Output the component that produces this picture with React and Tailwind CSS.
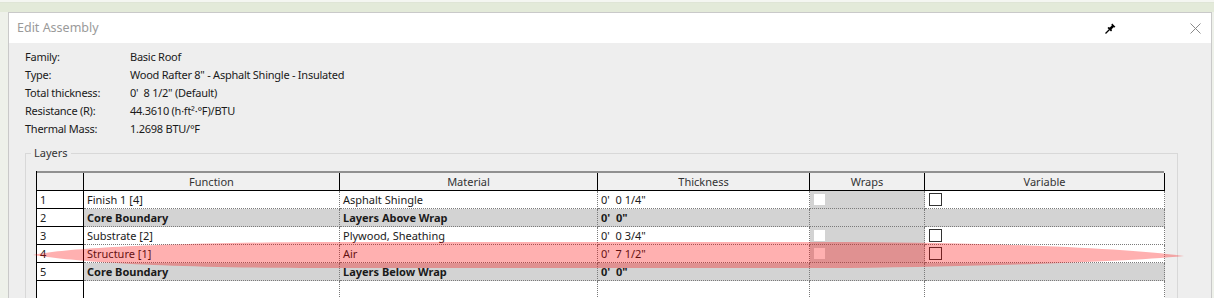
import React from 'react';

const info = [
  ['Family:', 'Basic Roof'],
  ['Type:', 'Wood Rafter 8" - Asphalt Shingle - Insulated'],
  ['Total thickness:', '0\'  8 1/2" (Default)'],
  ['Resistance (R):', '44.3610 (h·ft²·°F)/BTU'],
  ['Thermal Mass:', '1.2698 BTU/°F'],
];

const columns = ['Function', 'Material', 'Thickness', 'Wraps', 'Variable'];

const layers = [
  { n: '1', fn: 'Finish 1 [4]', mat: 'Asphalt Shingle', th: "0'  0 1/4\"", wraps: true, variable: true },
  { n: '2', fn: 'Core Boundary', mat: 'Layers Above Wrap', th: "0'  0\"", core: true },
  { n: '3', fn: 'Substrate [2]', mat: 'Plywood, Sheathing', th: "0'  0 3/4\"", wraps: true, variable: true },
  { n: '4', fn: 'Structure [1]', mat: 'Air', th: "0'  7 1/2\"", wraps: true, variable: true },
  { n: '5', fn: 'Core Boundary', mat: 'Layers Below Wrap', th: "0'  0\"", core: true },
  { n: '', fn: '', mat: '', th: '' },
];

const grid = 'grid grid-cols-[47px_256px_258px_212px_115px_240px]';

const PinIcon = () => (
  <svg width="11" height="11" viewBox="0 0 11 11">
    <path d="M0.5 10.5 L4.5 6.5" stroke="#000" strokeWidth="1.2" />
    <path d="M2.5 5 L6 8.5 L7 7.5 L6.6 6.2 L8.6 4.2 L9.6 4.6 L10.4 3.8 L7.2 0.6 L6.4 1.4 L6.8 2.4 L4.8 4.4 L3.5 4 Z" fill="#000" />
  </svg>
);

const CloseIcon = () => (
  <svg width="11" height="11" viewBox="0 0 11 11">
    <path d="M0.5 0.5 L10.5 10.5 M10.5 0.5 L0.5 10.5" stroke="#8a8a8a" strokeWidth="1" />
  </svg>
);

const Row = ({ row }) => {
  const bg = row.core ? 'bg-[#d3d3d3] font-bold' : 'bg-white';
  const cell = 'h-[18px] border-r border-b border-dotted border-[#7a7a7a] pl-[3px] leading-[17px] whitespace-pre overflow-hidden';
  return (
    <div className={grid}>
      <div className="h-[18px] border-r border-b border-black bg-white pl-[3px] leading-[17px] text-[#222]">{row.n}</div>
      <div className={`${cell} ${bg}`}>{row.fn}</div>
      <div className={`${cell} ${bg}`}>{row.mat}</div>
      <div className={`${cell} ${bg}`}>{row.th}</div>
      <div className={`${cell} ${row.core || row.wraps ? 'bg-[#d3d3d3]' : 'bg-white'} flex items-center`}>
        {row.wraps && <span className="ml-[1px] w-[11px] h-[11px] bg-white" />}
      </div>
      <div className={`${cell} ${row.core ? 'bg-[#d3d3d3]' : 'bg-white'} flex items-center`}>
        {row.variable && <span className="ml-[1px] w-[13px] h-[13px] border border-[#333] bg-white" />}
      </div>
    </div>
  );
};

export default function App() {
  return (
    <div className="relative w-[1214px] h-[298px] overflow-hidden bg-[#eef1ea] font-['Noto_Sans',sans-serif] text-[11px] text-[#1a1a1a]">
      <div className="h-[3px] bg-[#f4f6f1] border-b border-[#dfe5d6]" />
      <div className="h-[9px] bg-[#e3ead9]" />
      <div className="flex">
        <div className="w-[8px] bg-[#eef1ea]" />
        <div className="w-[1204px] border-l border-t border-r border-[#c9c9c9] bg-[#eeeeee]">
          <div className="h-[30px] bg-white flex items-center pl-[8px] pr-[10px]">
            <span className="text-[12.5px] text-[#9a9a9a]">Edit Assembly</span>
            <span className="ml-auto mr-[74px] flex"><PinIcon /></span>
            <span className="flex"><CloseIcon /></span>
          </div>
          <div className="pt-[5px] pl-[16px] tracking-[-0.25px]">
            {info.map(([k, v]) => (
              <div key={k} className="grid grid-cols-[105px_1fr] leading-[18px] whitespace-pre">
                <span>{k}</span>
                <span>{v}</span>
              </div>
            ))}
          </div>
          <fieldset className="mt-[7px] ml-[16px] w-[1153px] h-[200px] border border-[#d8d8d8] pl-[10px] pt-[10px]">
            <legend className="ml-[-5px] px-[3px] leading-[16px] text-[#333]">Layers</legend>
            <div className="w-[1128px] border-l border-black">
              <div className={`${grid} bg-[#f0f0f0] border-t-2 border-[#909090] text-center text-[#333]`}>
                <div className="h-[18px] border-r border-b border-black" />
                {columns.map((c) => (
                  <div key={c} className="h-[18px] border-r border-b border-black leading-[17px]">{c}</div>
                ))}
              </div>
              {layers.map((row, i) => (
                <Row key={i} row={row} />
              ))}
            </div>
          </fieldset>
        </div>
      </div>
      <svg className="absolute top-0 left-0 pointer-events-none" width="1214" height="298" viewBox="0 0 1214 298">
        <path
          d="M33,255 C60,250 120,244 300,242 L850,242 C1000,243 1120,248 1184,256 C1120,262 1000,266 850,268 L300,268 C120,267 60,259 33,255 Z"
          fill="rgba(255,0,0,0.31)"
        />
      </svg>
    </div>
  );
}
